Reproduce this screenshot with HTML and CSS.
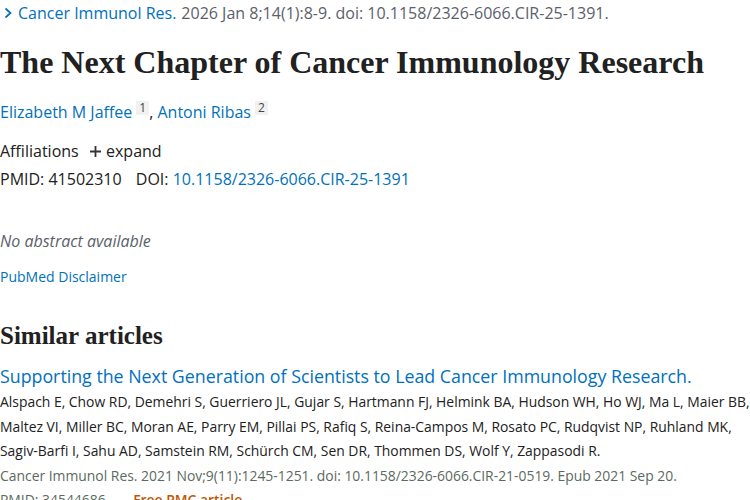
FILE: index.html
```html
<!DOCTYPE html>
<html lang="en">
<head>
  <meta charset="UTF-8">
  <title>The Next Chapter of Cancer Immunology Research</title>
  <meta name="viewport" content="width=device-width, initial-scale=1">
  <link rel="stylesheet" href="styles.css">
</head>
<body>

  <!-- EN-TETE ARTICLE -->
  <div class="article">
    <div class="citation">
      <svg class="citation__chevron" width="10" height="12" viewBox="0 0 10 12"><path d="M2.5 1.5 L7.5 6 L2.5 10.5" fill="none" stroke="#0071bc" stroke-width="1.7"/></svg>
      <a href="#">Cancer Immunol Res.</a>
      <span class="citation__text">2026 Jan 8;14(1):8-9. doi: 10.1158/2326-6066.CIR-25-1391.</span>
    </div>

    <h1 class="heading-title">The Next Chapter of Cancer Immunology Research</h1>

    <div class="authors">
      <a href="#">Elizabeth M Jaffee</a><sup class="affil">1</sup>, <a href="#">Antoni Ribas</a><sup class="affil">2</sup>
    </div>

    <div class="meta-line">
      Affiliations
      <span class="expand">
        <svg width="13" height="13" viewBox="0 0 13 13"><path d="M6.5 1 V12 M1 6.5 H12" stroke="#333" stroke-width="1.8"/></svg>
        expand
      </span>
    </div>
    <div class="meta-line ids">
      <span>PMID: 41502310</span>
      <span>DOI: <a href="#">10.1158/2326-6066.CIR-25-1391</a></span>
    </div>

    <p class="empty-abstract">No abstract available</p>
    <a class="disclaimer" href="#">PubMed Disclaimer</a>
  </div>

  <!-- ARTICLES SIMILAIRES -->
  <div class="similar">
    <h2 class="similar__title">Similar articles</h2>
    <div class="docsum">
      <a class="docsum__title" href="#">Supporting the Next Generation of Scientists to Lead Cancer Immunology Research.</a>
      <div class="docsum__authors">Alspach E, Chow RD, Demehri S, Guerriero JL, Gujar S, Hartmann FJ, Helmink BA, Hudson WH, Ho WJ, Ma L, Maier BB, Maltez VI, Miller BC, Moran AE, Parry EM, Pillai PS, Rafiq S, Reina-Campos M, Rosato PC, Rudqvist NP, Ruhland MK, Sagiv-Barfi I, Sahu AD, Samstein RM, Schürch CM, Sen DR, Thommen DS, Wolf Y, Zappasodi R.</div>
      <div class="docsum__journal">Cancer Immunol Res. 2021 Nov;9(11):1245-1251. doi: 10.1158/2326-6066.CIR-21-0519. Epub 2021 Sep 20.</div>
      <div class="docsum__ids">PMID: 34544686 <span class="free">Free PMC article.</span></div>
    </div>
  </div>

</body>
</html>
```

FILE: styles.css
```css
html, body {
  margin: 0;
  padding: 0;
  height: 100%;
  overflow: hidden;
  background: #fff;
  color: #212121;
  font-family: "Open Sans", "Noto Sans", sans-serif;
}

a {
  color: #0071bc;
  text-decoration: none;
}

/* === EN-TETE ARTICLE === */
.citation {
  display: flex;
  align-items: center;
  gap: 5px;
  height: 26px;
  padding-left: 3px;
  font-size: 16px;
  white-space: nowrap;
}

.citation__text { color: #5b616b; }

.heading-title {
  margin: 16px 0 0;
  font-family: "Liberation Serif", serif;
  font-size: 32px;
  line-height: 40px;
  font-weight: bold;
  color: #212121;
  white-space: nowrap;
}

.authors {
  margin-top: 18px;
  font-size: 16px;
  line-height: 24px;
}

.affil {
  display: inline-block;
  margin-left: 4px;
  padding: 0 3px;
  font-size: 12px;
  line-height: 14px;
  vertical-align: 6px;
  background: #f1f1f1;
  color: #444;
}

.meta-line {
  font-size: 16px;
  line-height: 28px;
}

.authors + .meta-line { margin-top: 13px; }

.expand {
  margin-left: 6px;
}

.expand svg { vertical-align: -1px; }

.ids span + span { margin-left: 10px; }

.empty-abstract {
  margin: 35px 0 0;
  font-size: 16px;
  line-height: 26px;
  font-style: italic;
  color: #5b616b;
}

.disclaimer {
  display: block;
  margin-top: 11px;
  font-size: 14px;
  line-height: 24px;
}

/* === ARTICLES SIMILAIRES === */
.similar__title {
  margin: 32px 0 0;
  font-family: "Liberation Serif", serif;
  font-size: 25px;
  line-height: 30px;
  font-weight: bold;
}

.docsum { margin-top: 11px; }

.docsum__title {
  display: block;
  font-size: 17.8px;
  line-height: 28px;
}

.docsum__authors {
  font-size: 13.9px;
  line-height: 24.5px;
}

.docsum__journal,
.docsum__ids {
  font-size: 13.9px;
  line-height: 24px;
  color: #5b6a5e;
}

.free {
  margin-left: 24px;
  color: #c05600;
  font-weight: 600;
}
```
